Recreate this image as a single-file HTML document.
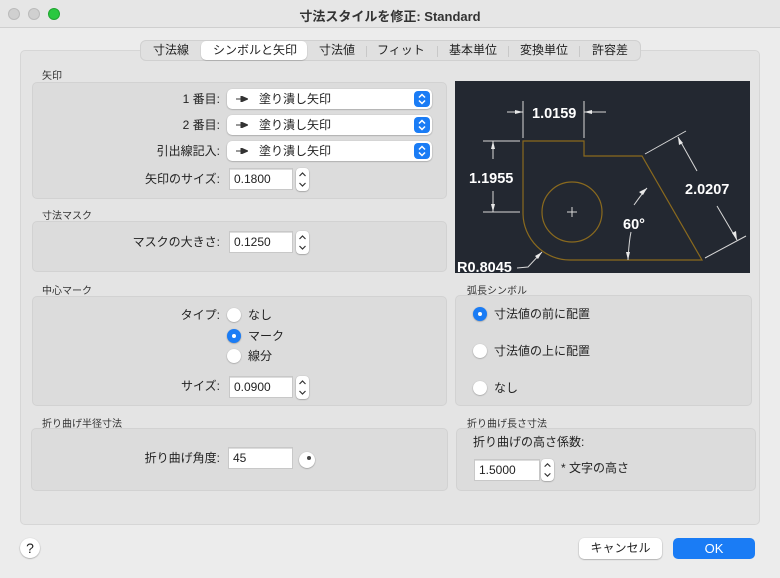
<!DOCTYPE html>
<html><head><meta charset="utf-8"><style>
*{box-sizing:border-box;margin:0;padding:0}
body{width:780px;height:578px;overflow:hidden;background:#ececec;font-family:"Liberation Sans","Noto Sans CJK JP",sans-serif;color:#222;position:relative;font-size:12px}
.a{position:absolute}
.lbl{position:absolute;font-size:10px;color:#333}
.grp{position:absolute;background:#dcdcdc;border:1px solid #d2d2d2;border-radius:5px}
.r{position:absolute;text-align:right;font-size:12px;line-height:14px}
.pop{position:absolute;background:#fff;border-radius:5px;box-shadow:0 0.5px 1.5px rgba(0,0,0,.35);height:20px;font-size:12px;line-height:20px;padding-left:32px}
.pop .ar{position:absolute;left:9px;top:7px;width:12px;height:6px}
.pop .bl{position:absolute;right:2px;top:2px;width:16px;height:16px;background:#1a7cf5;border-radius:4px}
.inp{position:absolute;background:#fff;border:1px solid #c8c8c8;height:22px;font-size:12px;line-height:20px;padding-left:4px;box-shadow:inset 0 1px 0 #ddd}
.stp{position:absolute;width:13px;height:23px;background:#fff;border-radius:4px;box-shadow:0 0.5px 1.5px rgba(0,0,0,.4)}
.rad{position:absolute;width:14px;height:14px;border-radius:50%;background:#fff;box-shadow:0 0.5px 1.5px rgba(0,0,0,.35)}
.rad.on{background:#1a7cf5}
.rad.on:after{content:"";position:absolute;left:5px;top:5px;width:4px;height:4px;border-radius:50%;background:#fff}
.t{position:absolute;font-size:12px;line-height:14px}
</style></head><body>
<div class="a" style="left:0;top:0;width:780px;height:28px;background:#e6e6e6;border-bottom:1px solid #cfcfcf"></div>
<div class="a" style="left:8px;top:8px;width:12px;height:12px;border-radius:50%;background:#d0d0d0;border:0.5px solid #bbb"></div>
<div class="a" style="left:28px;top:8px;width:12px;height:12px;border-radius:50%;background:#d0d0d0;border:0.5px solid #bbb"></div>
<div class="a" style="left:48px;top:8px;width:12px;height:12px;border-radius:50%;background:#2ac840;border:0.5px solid #20a530"></div>
<div class="a" style="left:0;top:6px;width:780px;text-align:center;font-weight:bold;font-size:13px;color:#333">寸法スタイルを修正: Standard</div>

<div class="a" style="left:20px;top:50px;width:740px;height:475px;background:#e4e4e4;border:1px solid #d6d6d6;border-radius:5px"></div>
<div class="a" style="left:140px;top:40px;width:501px;height:21px;background:#e0e0e0;border:1px solid #d0d0d0;border-radius:6px"></div>
<div class="a" style="left:201px;top:41px;width:106px;height:19px;background:#fff;border-radius:5px;box-shadow:0 0.5px 1px rgba(0,0,0,.3)"></div>
<div class="a" style="top:43px;left:140px;width:501px;height:16px;font-size:12px;line-height:15px">
<span class="a" style="left:13px">寸法線</span><span class="a" style="left:73px">シンボルと矢印</span><span class="a" style="left:179px">寸法値</span><span class="a" style="left:237px">フィット</span><span class="a" style="left:309px">基本単位</span><span class="a" style="left:380px">変換単位</span><span class="a" style="left:452px">許容差</span>
<span class="a" style="left:226px;top:3px;width:1px;height:11px;background:#c8c8c8"></span><span class="a" style="left:297px;top:3px;width:1px;height:11px;background:#c8c8c8"></span><span class="a" style="left:368px;top:3px;width:1px;height:11px;background:#c8c8c8"></span><span class="a" style="left:439px;top:3px;width:1px;height:11px;background:#c8c8c8"></span>
</div>

<div class="lbl" style="left:42px;top:67px">矢印</div>
<div class="grp" style="left:32px;top:82px;width:415px;height:117px"></div>
<div class="r" style="left:100px;width:120px;top:92px">1 番目:</div>
<div class="r" style="left:100px;width:120px;top:118px">2 番目:</div>
<div class="r" style="left:100px;width:120px;top:144px">引出線記入:</div>
<div class="r" style="left:100px;width:120px;top:172px">矢印のサイズ:</div>
<div class="pop" style="left:227px;top:89px;width:205px"><svg class="ar" viewBox="0 0 12 6"><path d="M0 3H5M5 0L12 3L5 6Z" stroke="#333" fill="#333"/></svg>塗り潰し矢印<span class="bl"><svg width="16" height="16" viewBox="0 0 16 16"><path d="M5 6.5L8 3.5L11 6.5M5 9.5L8 12.5L11 9.5" stroke="#fff" stroke-width="1.5" fill="none"/></svg></span></div>
<div class="pop" style="left:227px;top:115px;width:205px"><svg class="ar" viewBox="0 0 12 6"><path d="M0 3H5M5 0L12 3L5 6Z" stroke="#333" fill="#333"/></svg>塗り潰し矢印<span class="bl"><svg width="16" height="16" viewBox="0 0 16 16"><path d="M5 6.5L8 3.5L11 6.5M5 9.5L8 12.5L11 9.5" stroke="#fff" stroke-width="1.5" fill="none"/></svg></span></div>
<div class="pop" style="left:227px;top:141px;width:205px"><svg class="ar" viewBox="0 0 12 6"><path d="M0 3H5M5 0L12 3L5 6Z" stroke="#333" fill="#333"/></svg>塗り潰し矢印<span class="bl"><svg width="16" height="16" viewBox="0 0 16 16"><path d="M5 6.5L8 3.5L11 6.5M5 9.5L8 12.5L11 9.5" stroke="#fff" stroke-width="1.5" fill="none"/></svg></span></div>
<div class="inp" style="left:229px;top:168px;width:64px">0.1800</div>
<svg class="stp" style="left:296px;top:168px" viewBox="0 0 13 23"><path d="M3.5 8L6.5 5L9.5 8M3.5 15L6.5 18L9.5 15" stroke="#333" stroke-width="1.2" fill="none"/></svg>

<div class="lbl" style="left:42px;top:207px">寸法マスク</div>
<div class="grp" style="left:32px;top:221px;width:415px;height:51px"></div>
<div class="r" style="left:80px;width:140px;top:235px">マスクの大きさ:</div>
<div class="inp" style="left:229px;top:231px;width:64px">0.1250</div>
<svg class="stp" style="left:296px;top:231px" viewBox="0 0 13 23"><path d="M3.5 8L6.5 5L9.5 8M3.5 15L6.5 18L9.5 15" stroke="#333" stroke-width="1.2" fill="none"/></svg>

<div class="lbl" style="left:42px;top:282px">中心マーク</div>
<div class="grp" style="left:32px;top:296px;width:415px;height:110px"></div>
<div class="r" style="left:100px;width:120px;top:308px">タイプ:</div>
<div class="rad" style="left:227px;top:308px"></div><div class="t" style="left:248px;top:308px">なし</div>
<div class="rad on" style="left:227px;top:329px"></div><div class="t" style="left:248px;top:329px">マーク</div>
<div class="rad" style="left:227px;top:349px"></div><div class="t" style="left:248px;top:349px">線分</div>
<div class="r" style="left:100px;width:120px;top:379px">サイズ:</div>
<div class="inp" style="left:229px;top:376px;width:64px">0.0900</div>
<svg class="stp" style="left:296px;top:376px" viewBox="0 0 13 23"><path d="M3.5 8L6.5 5L9.5 8M3.5 15L6.5 18L9.5 15" stroke="#333" stroke-width="1.2" fill="none"/></svg>

<div class="lbl" style="left:42px;top:415px">折り曲げ半径寸法</div>
<div class="grp" style="left:31px;top:428px;width:417px;height:63px"></div>
<div class="r" style="left:80px;width:140px;top:451px">折り曲げ角度:</div>
<div class="inp" style="left:228px;top:447px;width:65px">45</div>
<div class="a" style="left:299px;top:452px;width:16px;height:16px;border-radius:50%;background:#fff;box-shadow:0 0.5px 1.5px rgba(0,0,0,.4)"><div class="a" style="left:8px;top:4px;width:4px;height:4px;border-radius:50%;background:#444"></div></div>

<svg class="a" style="left:455px;top:81px" width="295" height="192" viewBox="0 0 295 192">
<rect width="295" height="192" fill="#232831"/>
<g fill="none" stroke="#8a6a1e" stroke-width="1.2">
<path d="M68 60H129V75H187L247 179H115A47 47 0 0 1 68 133Z"/>
<circle cx="117" cy="131" r="30"/>
</g>
<g stroke="#d8d8d8" stroke-width="1" fill="none">
<path d="M68 20V57M129 20V57M52 31H68M129 31H151"/>
<path d="M117 126V136M112 131H122"/>
<path d="M28 60H65M28 131H65M38 60V78M38 110V131"/>
<path d="M190 73L231 50M250 177L291 155M223 56L242 90M262 125L282 159"/>
<path d="M192 107Q186 114 179 124M176 151Q174 160 173 179"/>
<path d="M62 187L73 186L87 171"/>
</g>
<g fill="#e8e8e8">
<path d="M68 31L60 29V33ZM129 31L137 29V33ZM38 60L36 68H40ZM38 131L36 123H40ZM223 56L224 64L228 62ZM282 159L277 152L281 150ZM192 107L184 111L188 114ZM173 179L171 171H175ZM87 171L80 175L83 178Z"/>
</g>
<g fill="#fff" font-family="Liberation Sans,sans-serif" font-size="14.5" font-weight="bold">
<text x="77" y="37">1.0159</text>
<text x="14" y="102">1.1955</text>
<text x="230" y="113">2.0207</text>
<text x="168" y="148">60°</text>
<text x="2" y="191">R0.8045</text>
</g>
</svg>

<div class="lbl" style="left:467px;top:282px">弧長シンボル</div>
<div class="grp" style="left:455px;top:295px;width:297px;height:111px"></div>
<div class="rad on" style="left:473px;top:307px"></div><div class="t" style="left:494px;top:307px">寸法値の前に配置</div>
<div class="rad" style="left:473px;top:344px"></div><div class="t" style="left:494px;top:344px">寸法値の上に配置</div>
<div class="rad" style="left:473px;top:381px"></div><div class="t" style="left:494px;top:381px">なし</div>

<div class="lbl" style="left:467px;top:415px">折り曲げ長さ寸法</div>
<div class="grp" style="left:456px;top:428px;width:300px;height:63px"></div>
<div class="t" style="left:473px;top:435px">折り曲げの高さ係数:</div>
<div class="inp" style="left:474px;top:459px;width:66px">1.5000</div>
<svg class="stp" style="left:541px;top:459px;height:22px" viewBox="0 0 13 23"><path d="M3.5 8L6.5 5L9.5 8M3.5 15L6.5 18L9.5 15" stroke="#333" stroke-width="1.2" fill="none"/></svg>
<div class="t" style="left:561px;top:461px">* 文字の高さ</div>

<div class="a" style="left:20px;top:538px;width:20px;height:20px;border-radius:50%;background:#fff;box-shadow:0 0.5px 1.5px rgba(0,0,0,.4);text-align:center;font-size:14px;line-height:20px">?</div>
<div class="a" style="left:579px;top:538px;width:83px;height:21px;border-radius:5px;background:#fff;box-shadow:0 0.5px 1.5px rgba(0,0,0,.4);text-align:center;font-size:12px;line-height:21px">キャンセル</div>
<div class="a" style="left:673px;top:538px;width:82px;height:21px;border-radius:5px;background:#1a7cf5;color:#fff;text-align:center;font-size:13px;line-height:21px">OK</div>
</body></html>
